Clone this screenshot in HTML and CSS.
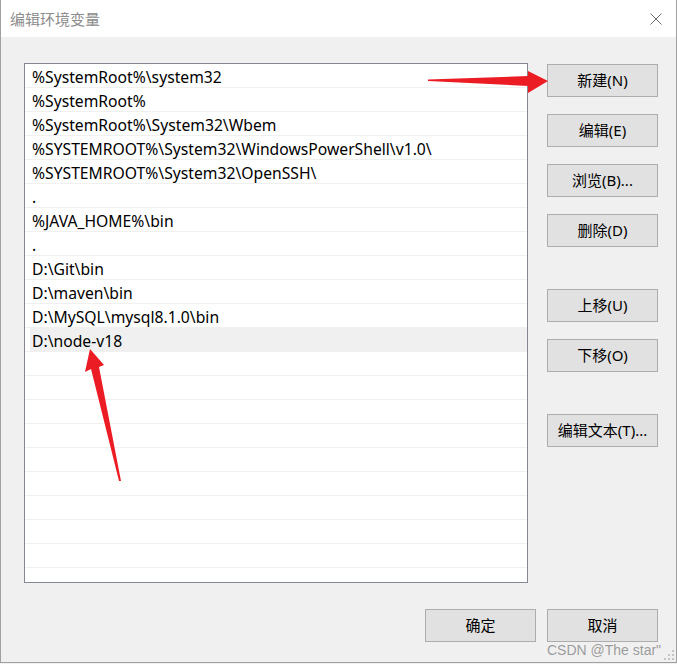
FILE: index.html
```html
<!DOCTYPE html>
<html lang="zh-CN">
<head>
    <meta charset="UTF-8">
    <title>编辑环境变量</title>
    <link rel="stylesheet" href="styles.css">
</head>
<body>

<div class="window">
    <div class="titlebar">
        <span class="title">编辑环境变量</span>
        <svg class="close" width="12" height="12" viewBox="0 0 12 12">
            <path d="M0.5 0.5 L11.5 11.5 M11.5 0.5 L0.5 11.5" stroke="#6b6b6b" stroke-width="1" fill="none"/>
        </svg>
    </div>

    <div class="content">
        <div class="main">
            <!-- Path list -->
            <div class="list">
                <div class="row">%SystemRoot%\system32</div>
                <div class="row">%SystemRoot%</div>
                <div class="row">%SystemRoot%\System32\Wbem</div>
                <div class="row">%SYSTEMROOT%\System32\WindowsPowerShell\v1.0\</div>
                <div class="row">%SYSTEMROOT%\System32\OpenSSH\</div>
                <div class="row">.</div>
                <div class="row">%JAVA_HOME%\bin</div>
                <div class="row">.</div>
                <div class="row">D:\Git\bin</div>
                <div class="row">D:\maven\bin</div>
                <div class="row">D:\MySQL\mysql8.1.0\bin</div>
                <div class="row selected">D:\node-v18</div>
                <div class="row"></div>
                <div class="row"></div>
                <div class="row"></div>
                <div class="row"></div>
                <div class="row"></div>
                <div class="row"></div>
                <div class="row"></div>
                <div class="row"></div>
                <div class="row"></div>
                <div class="row"></div>
            </div>

            <!-- Side buttons -->
            <div class="side">
                <button class="btn">新建(N)</button>
                <button class="btn">编辑(E)</button>
                <button class="btn">浏览(B)...</button>
                <button class="btn">删除(D)</button>
                <button class="btn group">上移(U)</button>
                <button class="btn">下移(O)</button>
                <button class="btn group">编辑文本(T)...</button>
            </div>
        </div>

        <div class="footer">
            <button class="btn">确定</button>
            <button class="btn">取消</button>
        </div>
    </div>

    <span class="watermark">CSDN @The star"</span>

    <svg class="grip" width="12" height="12" viewBox="0 0 12 12">
        <rect x="9" y="1" width="2" height="2" fill="#c4c4c4"/>
        <rect x="5" y="5" width="2" height="2" fill="#c4c4c4"/>
        <rect x="9" y="5" width="2" height="2" fill="#c4c4c4"/>
        <rect x="1" y="9" width="2" height="2" fill="#c4c4c4"/>
        <rect x="5" y="9" width="2" height="2" fill="#c4c4c4"/>
        <rect x="9" y="9" width="2" height="2" fill="#c4c4c4"/>
    </svg>

    <!-- red annotation arrows -->
    <svg class="arrows" width="677" height="664" viewBox="0 0 677 664">
        <polygon fill="#ec1c24" points="428,79.5 528,76 528,71 548,81 528,93 528,86 428,81"/>
        <polygon fill="#ec1c24" points="90,349 104,365 99,367 121,481 119,481 91,369 85,372"/>
    </svg>
</div>

</body>
</html>
```

FILE: styles.css
```css
body {
    margin: 0;
    padding: 0;
    background-color: #f0f0f0;
    font-family: "Noto Sans", "Noto Sans CJK SC", sans-serif;
    font-size: 15px;
    color: #000;
}

.window {
    position: relative;
    width: 677px;
    height: 663px;
    box-sizing: border-box;
    border: 1px solid #a0a0a0;
    border-top: none;
    background-color: #f0f0f0;
    overflow: hidden;
}

.titlebar {
    height: 37px;
    background-color: #fff;
    display: flex;
    align-items: center;
    justify-content: space-between;
    padding: 0 14px 0 9px;
}

.title {
    color: #8c8c8c;
    font-size: 15px;
    padding-bottom: 1px;
}

.close {
    margin-top: 1px;
}

.content {
    padding: 26px 18px 0 23px;
}

.main {
    display: flex;
    gap: 19px;
}

.list {
    width: 504px;
    height: 520px;
    box-sizing: border-box;
    border: 1px solid #828790;
    background-color: #fff;
    overflow: hidden;
}

.row {
    height: 20px;
    padding-top: 3px;
    line-height: 21px;
    font-size: 15.7px;
    border-bottom: 1px solid #f0f0f0;
    padding-left: 7px;
    white-space: nowrap;
}

.row.selected {
    background: linear-gradient(to right, transparent 5px, #f0f0f0 5px);
}

.side {
    display: flex;
    flex-direction: column;
    gap: 17px;
    padding-top: 1px;
}

.btn {
    width: 111px;
    height: 33px;
    box-sizing: border-box;
    border: 1px solid #adadad;
    background-color: #e1e1e1;
    font-family: inherit;
    font-size: 15px;
    color: #000;
    padding: 0 0 3px 0;
}

.side .group {
    margin-top: 25px;
}

.footer {
    display: flex;
    justify-content: flex-end;
    gap: 11px;
    margin-top: 26px;
}

.watermark {
    position: absolute;
    left: 546px;
    top: 642px;
    font-family: "Liberation Sans", Arial, sans-serif;
    font-size: 14px;
    color: rgba(140, 140, 140, 0.85);
    white-space: nowrap;
}

.grip {
    position: absolute;
    right: 1px;
    bottom: 1px;
}

.arrows {
    position: absolute;
    left: -1px;
    top: 0;
    pointer-events: none;
}
```
